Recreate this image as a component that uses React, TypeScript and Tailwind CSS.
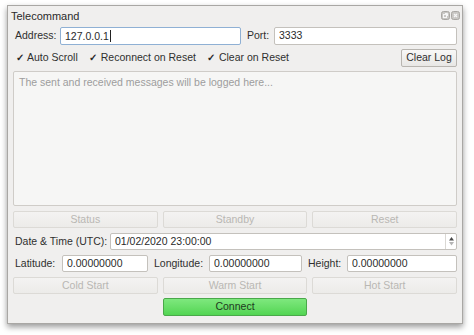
import { type ReactNode } from "react";

const FONT = "font-['Liberation_Sans',Arial,sans-serif]";

function TextBox({
  value,
  className = "",
  focused = false,
  children,
}: {
  value: string;
  className?: string;
  focused?: boolean;
  children?: ReactNode;
}) {
  return (
    <div
      className={`flex h-full items-center rounded-[2px] border bg-white pl-[4px] text-[#2a2a2a] ${
        focused ? "border-[#8fb0d4]" : "border-[#c4c1bc]"
      } ${className}`}
    >
      <span className="flex-1 truncate">
        {value}
        {focused ? <span className="ml-[1px] inline-block h-[12px] w-px translate-y-[2px] bg-[#222]" /> : null}
      </span>
      {children}
    </div>
  );
}

function Check({ label }: { label: string }) {
  return (
    <label className="flex items-center gap-[4px]">
      <span className="flex h-[10px] w-[7px] items-center justify-center text-[10px] font-bold leading-none text-[#2a2a2a]">
        ✓
      </span>
      <span>{label}</span>
    </label>
  );
}

function DisabledButton({ label }: { label: string }) {
  return (
    <button
      type="button"
      disabled
      className="flex h-full flex-1 items-center justify-center rounded-[2px] border border-[#dcdad6] bg-gradient-to-b from-[#f4f3f2] to-[#ecebe9] text-[#b9b7b3]"
    >
      {label}
    </button>
  );
}

function TitleIcon({ kind }: { kind: "float" | "close" }) {
  return (
    <svg width="9" height="9" viewBox="0 0 9 9">
      <rect x="0.5" y="0.5" width="8" height="8" rx="2" fill="#c9c7c4" stroke="#a9a7a3" />
      {kind === "close" ? (
        <path d="M3 3l3 3M6 3l-3 3" stroke="#f6f6f6" strokeWidth="1.2" />
      ) : (
        <>
          <rect x="2.5" y="3.5" width="3" height="3" fill="none" stroke="#f6f6f6" />
          <path d="M4 2.5h2.5v2.5" fill="none" stroke="#f6f6f6" />
        </>
      )}
    </svg>
  );
}

export default function App() {
  return (
    <div className={`h-[335px] w-[474px] bg-white pl-[7px] pt-[5px] ${FONT} text-[10.5px] text-[#2f2f2f]`}>
      <div className="flex h-[319px] w-[456px] flex-col border border-[#a9a7a4] bg-[#f0efee] px-[5px] shadow-[0_3px_6px_rgba(0,0,0,0.4)]">
        {/* title */}
        <div className="-ml-[2px] -mr-[3px] flex h-[21px] items-center justify-between">
          <span className="text-[11px] text-[#2a2a2a]">Telecommand</span>
          <div className="-mt-[2px] flex gap-[1px]">
            <TitleIcon kind="float" />
            <TitleIcon kind="close" />
          </div>
        </div>

        {/* address / port */}
        <div className="flex h-[18px] items-center">
          <span className="ml-[2px] w-[45px]">Address:</span>
          <TextBox value="127.0.0.1" focused className="w-[181px]" />
          <span className="ml-[6px] w-[27px]">Port:</span>
          <TextBox value="3333" className="flex-1" />
        </div>

        {/* options */}
        <div className="mt-[4px] flex h-[18px] items-center">
          <div className="ml-[3px] flex flex-1 items-center gap-[12px]">
            <Check label="Auto Scroll" />
            <Check label="Reconnect on Reset" />
            <Check label="Clear on Reset" />
          </div>
          <button
            type="button"
            className="h-full w-[56px] rounded-[2px] border border-[#b8b5b0] bg-gradient-to-b from-[#f8f8f7] to-[#e8e7e5] text-[#2f2f2f]"
          >
            Clear Log
          </button>
        </div>

        {/* log */}
        <div className="mt-[4px] h-[135px] rounded-[2px] border border-[#cfccc8] bg-[#f6f6f5] px-[5px] py-[3px] text-[#9d9d9d]">
          The sent and received messages will be logged here...
        </div>

        {/* mode buttons */}
        <div className="mt-[5px] flex h-[17px] gap-[5px]">
          <DisabledButton label="Status" />
          <DisabledButton label="Standby" />
          <DisabledButton label="Reset" />
        </div>

        {/* date */}
        <div className="mt-[5px] flex h-[17px] items-center">
          <span className="ml-[2px] w-[95px]">Date &amp; Time (UTC):</span>
          <TextBox value="01/02/2020 23:00:00" className="flex-1">
            <div className="flex h-full w-[11px] flex-col items-center justify-center border-l border-[#dad8d4]">
              <svg width="5" height="4" viewBox="0 0 5 4">
                <path d="M2.5 0L5 3.5H0z" fill="#4a4a4a" />
              </svg>
              <svg width="5" height="4" viewBox="0 0 5 4" className="mt-[1px]">
                <path d="M2.5 3.5L5 0H0z" fill="#b5b5b5" />
              </svg>
            </div>
          </TextBox>
        </div>

        {/* coordinates */}
        <div className="mt-[5px] flex h-[17px] items-center">
          <span className="ml-[2px] w-[47px]">Latitude:</span>
          <TextBox value="0.00000000" className="w-[86px]" />
          <span className="ml-[6px] w-[55px]">Longitude:</span>
          <TextBox value="0.00000000" className="w-[93px]" />
          <span className="ml-[6px] w-[39px]">Height:</span>
          <TextBox value="0.00000000" className="flex-1" />
        </div>

        {/* start buttons */}
        <div className="mt-[5px] flex h-[17px] gap-[5px]">
          <DisabledButton label="Cold Start" />
          <DisabledButton label="Warm Start" />
          <DisabledButton label="Hot Start" />
        </div>

        {/* connect */}
        <div className="mt-[4px] flex h-[18px] justify-center">
          <button
            type="button"
            className="w-[144px] rounded-[2px] border border-[#4aa84a] bg-gradient-to-b from-[#7ee87e] to-[#52d552] text-[#1f3a1f]"
          >
            Connect
          </button>
        </div>
      </div>
    </div>
  );
}
